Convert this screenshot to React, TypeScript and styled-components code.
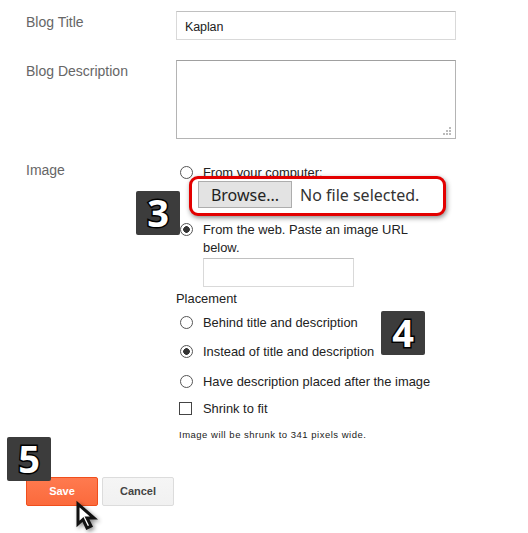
import React from "react";
import styled, { createGlobalStyle } from "styled-components";

const GlobalStyles = createGlobalStyle`
  html, body {
    margin: 0;
    padding: 0;
    background: #fff;
  }
  body {
    font-family: "Liberation Sans", Arial, sans-serif;
  }
`;

const Page = styled.div`
  position: relative;
  width: 528px;
  height: 533px;
  overflow: hidden;
  padding: 11px 0 0 26px;
  box-sizing: border-box;
  color: #222;
`;

const Row = styled.div<{ $gap?: number }>`
  display: grid;
  grid-template-columns: 150px 280px;
  margin-bottom: ${(p) => p.$gap ?? 0}px;
`;

const Label = styled.div<{ $top: number }>`
  font-size: 14px;
  line-height: 18px;
  color: #666;
  padding-top: ${(p) => p.$top}px;
`;

const TextInput = styled.div`
  height: 29px;
  box-sizing: border-box;
  border: 1px solid #d9d9d9;
  border-top-color: #c0c0c0;
  padding: 2px 8px 0;
  font-size: 12.5px;
  line-height: 27px;
  letter-spacing: -0.1px;
  color: #222;
`;

const TextArea = styled.div`
  position: relative;
  height: 79px;
  box-sizing: border-box;
  border: 1px solid #b4b4b4;
  border-top-color: #a0a0a0;
`;

const Grip = styled.svg`
  position: absolute;
  right: 3px;
  bottom: 2px;
`;

const Options = styled.div`
  display: flex;
  flex-direction: column;
  padding-top: 2px;
`;

const Choice = styled.div<{ $height: number }>`
  display: grid;
  grid-template-columns: 27px 1fr;
  align-items: center;
  height: ${(p) => p.$height}px;
  font-size: 12.9px;
  line-height: 19px;
  color: #222;
  white-space: nowrap;
`;

const Indented = styled.div`
  margin: -1px 0 1px 27px;
  font-size: 12.9px;
  line-height: 19px;
  height: 19px;
  color: #222;
`;

const Radio = styled.span<{ $checked?: boolean }>`
  justify-self: start;
  margin-left: 4px;
  width: 13px;
  height: 13px;
  box-sizing: border-box;
  border: 1px solid #555;
  border-radius: 50%;
  background: ${(p) => (p.$checked ? "radial-gradient(circle, #333 0 3px, #fff 3.6px)" : "#fff")};
`;

const Check = styled.span`
  justify-self: start;
  margin-left: 3px;
  width: 13px;
  height: 13px;
  box-sizing: border-box;
  border: 1px solid #444;
  background: #fff;
`;

const FileSlot = styled.div`
  height: 38px;
`;

const UrlInput = styled.div`
  width: 151px;
  height: 29px;
  margin-left: 27px;
  box-sizing: border-box;
  border: 1px solid #d9d9d9;
  border-top-color: #c0c0c0;
`;

const SubHeading = styled.div`
  margin-top: 2px;
  font-size: 12.9px;
  line-height: 19px;
  color: #222;
`;

const Note = styled.div`
  margin: 8px 0 0 3px;
  font-size: 9.5px;
  line-height: 12px;
  letter-spacing: 0.5px;
  color: #222;
`;

const Actions = styled.div`
  display: flex;
  gap: 4px;
  margin-top: 36px;
`;

const Button = styled.div<{ $primary?: boolean }>`
  width: 72px;
  height: 29px;
  box-sizing: border-box;
  border: 1px solid ${(p) => (p.$primary ? "#f04e1c" : "#dcdcdc")};
  border-radius: 2px;
  background: ${(p) => (p.$primary ? "linear-gradient(#ff7a4f, #fb6a3c)" : "linear-gradient(#f5f5f5, #f1f1f1)")};
  color: ${(p) => (p.$primary ? "#fff" : "#444")};
  font-size: 11px;
  font-weight: 700;
  line-height: 27px;
  text-align: center;
`;

const Badge = styled.div<{ $x: number; $y: number }>`
  position: absolute;
  left: ${(p) => p.$x}px;
  top: ${(p) => p.$y}px;
  width: 44px;
  height: 44px;
  border-radius: 2px;
  background: #3c3c3c;
  color: #fff;
  font-family: "Open Sans", "Liberation Sans", sans-serif;
  font-size: 38px;
  font-weight: 700;
  line-height: 43px;
  text-align: center;
  -webkit-text-stroke: 3px #000;
  paint-order: stroke fill;
`;

const Callout = styled.div`
  position: absolute;
  left: 189px;
  top: 176px;
  width: 257px;
  height: 40px;
  box-sizing: border-box;
  display: flex;
  align-items: center;
  gap: 8px;
  padding: 0 0 3px 6px;
  background: #fff;
  border: 3px solid #e30000;
  border-radius: 9px;
  box-shadow: 1px 2px 5px rgba(0, 0, 0, 0.45);
  font-family: "Noto Sans", sans-serif;
  font-size: 16px;
  color: #333;
  white-space: nowrap;
`;

const Browse = styled.div`
  width: 94px;
  height: 27px;
  box-sizing: border-box;
  border: 1px solid #adadad;
  background: #e3e3e3;
  text-align: center;
  line-height: 26px;
  color: #222;
`;

const Pointer = styled.svg`
  position: absolute;
  left: 70px;
  top: 497px;
  filter: drop-shadow(2px 2px 2px rgba(0, 0, 0, 0.45));
`;

export default function App() {
  return (
    <Page>
      <GlobalStyles />
      <Row $gap={20}>
        <Label $top={2}>Blog Title</Label>
        <TextInput>Kaplan</TextInput>
      </Row>
      <Row $gap={22}>
        <Label $top={2}>Blog Description</Label>
        <TextArea>
          <Grip width="9" height="9" viewBox="0 0 9 9" fill="#bbb">
            <rect x="6" y="0" width="2" height="2" />
            <rect x="3" y="3" width="2" height="2" />
            <rect x="6" y="3" width="2" height="2" />
            <rect x="0" y="6" width="2" height="2" />
            <rect x="3" y="6" width="2" height="2" />
            <rect x="6" y="6" width="2" height="2" />
          </Grip>
        </TextArea>
      </Row>
      <Row>
        <Label $top={0}>Image</Label>
        <Options>
          <Choice $height={19}>
            <Radio />
            <span>From your computer:</span>
          </Choice>
          <FileSlot />
          <Choice $height={19}>
            <Radio $checked />
            <span>From the web. Paste an image URL</span>
          </Choice>
          <Indented>below.</Indented>
          <UrlInput />
          <SubHeading>Placement</SubHeading>
          <Choice $height={28}>
            <Radio />
            <span>Behind title and description</span>
          </Choice>
          <Choice $height={31}>
            <Radio $checked />
            <span>Instead of title and description</span>
          </Choice>
          <Choice $height={28}>
            <Radio />
            <span>Have description placed after the image</span>
          </Choice>
          <Choice $height={26}>
            <Check />
            <span>Shrink to fit</span>
          </Choice>
          <Note>Image will be shrunk to 341 pixels wide.</Note>
        </Options>
      </Row>
      <Actions>
        <Button $primary>Save</Button>
        <Button>Cancel</Button>
      </Actions>
      <Callout>
        <Browse>Browse...</Browse>
        <span>No file selected.</span>
      </Callout>
      <Badge $x={136} $y={191}>3</Badge>
      <Badge $x={381} $y={311}>4</Badge>
      <Badge $x={7} $y={437}>5</Badge>
      <Pointer width="30" height="37" viewBox="0 0 30 37">
        <path
          d="M8 7 L8 27 L13 22.5 L17 31 L21 29 L17 21 L24 21 Z"
          fill="#fff"
          stroke="#111"
          strokeWidth="3"
          strokeLinejoin="miter"
        />
      </Pointer>
    </Page>
  );
}
